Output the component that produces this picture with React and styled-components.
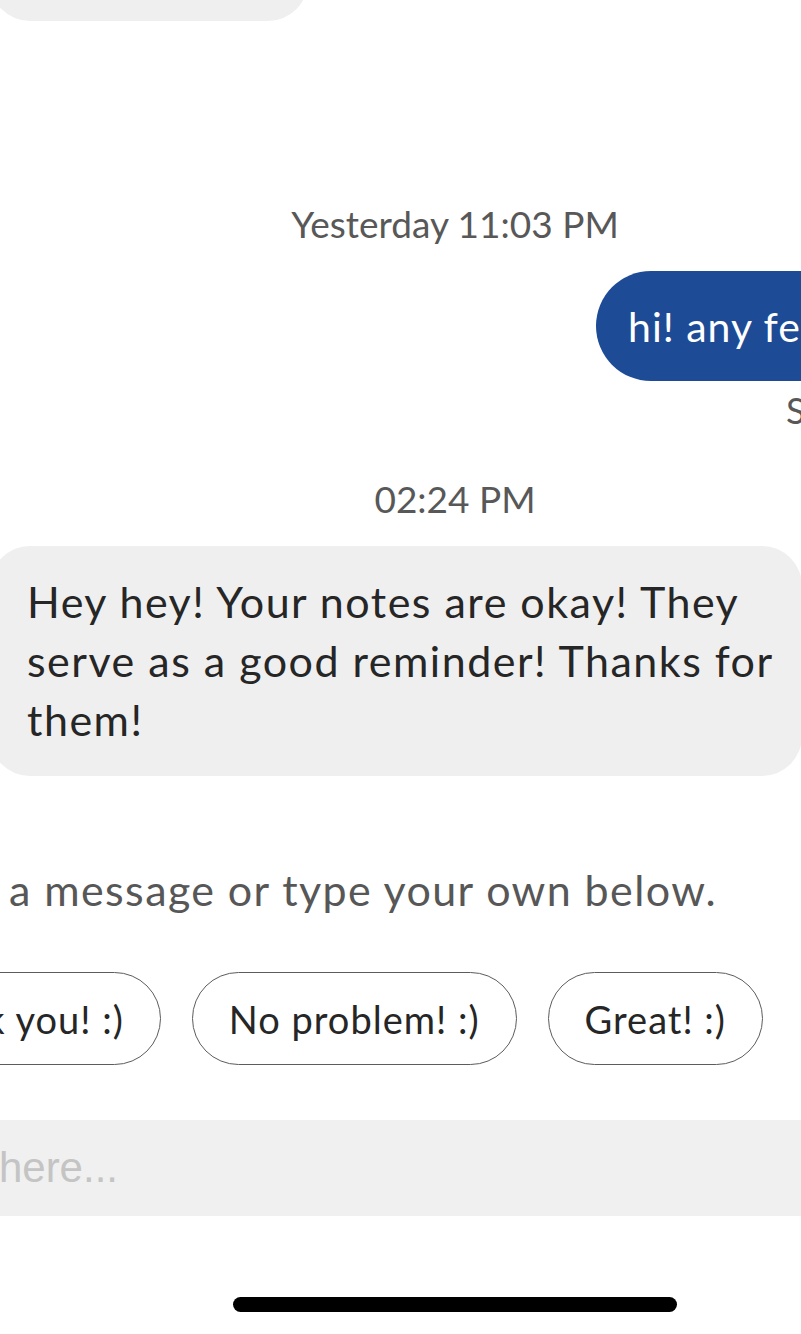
import React from 'react'
import styled, { createGlobalStyle } from 'styled-components'

const Global = createGlobalStyle`
  html, body {
    margin: 0;
    padding: 0;
    background: #fff;
  }
  body {
    font-family: Lato, "Noto Sans", sans-serif;
  }
`

const Viewport = styled.div`
  width: 801px;
  height: 1334px;
  overflow: hidden;
  background: #fff;
`

const Screen = styled.div`
  width: 930px;
  margin-left: -10px;
  height: 1334px;
  display: flex;
  flex-direction: column;
`

const Received = styled.div`
  align-self: flex-start;
  background: #efefef;
  color: #262626;
  border-radius: 40px;
  padding: 26px 20px 27px 37px;
  font-size: 43px;
  letter-spacing: 1.5px;
  line-height: 59px;
  width: 812px;
  box-sizing: border-box;
  margin-top: 25px;
`

const ClippedReceived = styled(Received)`
  width: 318px;
  height: 120px;
  margin-top: -99px;
  color: transparent;
`

const Stamp = styled.div`
  text-align: center;
  color: #585858;
  font-size: 37px;
  line-height: 44px;
  margin-top: ${p => p.$top}px;
`

const SentRow = styled.div`
  display: flex;
  margin-top: 25px;
  padding-left: 606px;
`

const Sent = styled.div`
  flex-shrink: 0;
  background: #1e4b96;
  color: #fff;
  height: 110px;
  border-radius: 55px;
  padding: 0 40px 0 32px;
  display: flex;
  align-items: center;
  font-size: 41px;
  letter-spacing: 1px;
  white-space: nowrap;
`

const Status = styled.div`
  padding-left: 796px;
  color: #585858;
  font-size: 36px;
  line-height: 40px;
  margin-top: 9px;
  white-space: nowrap;
`

const Hint = styled.div`
  display: flex;
  justify-content: flex-end;
  padding-right: 203px;
  margin-top: 89px;
  color: #575757;
  font-size: 43px;
  letter-spacing: 1.4px;
  line-height: 50px;
  white-space: nowrap;
`

const ChipRow = styled.div`
  display: flex;
  justify-content: flex-end;
  gap: 31px;
  padding-right: 157px;
  margin-top: 57px;
`

const Chip = styled.div`
  flex-shrink: 0;
  height: 93px;
  box-sizing: border-box;
  border: 1.5px solid #5c5c5c;
  border-radius: 47px;
  padding: 0 36px;
  display: flex;
  align-items: center;
  font-size: 38px;
  letter-spacing: 1px;
  color: #262626;
  white-space: nowrap;
`

const InputBar = styled.div`
  margin-top: 55px;
  height: 96px;
  background: #f0f0f0;
  display: flex;
  align-items: center;
  justify-content: flex-end;
  padding-right: 802px;
  font-family: "Liberation Sans", Arial, sans-serif;
  font-size: 42px;
  color: #c4c4c4;
  white-space: nowrap;
`

const HomeIndicator = styled.div`
  align-self: center;
  width: 444px;
  height: 15px;
  border-radius: 8px;
  background: #000;
  margin-top: 81px;
`

export default function App() {
  return (
    <Viewport>
      <Global />
      <Screen>
        <ClippedReceived>Sounds good!</ClippedReceived>
        <Stamp $top={181}>Yesterday 11:03 PM</Stamp>
        <SentRow>
          <Sent>hi! any feedback on my notes?</Sent>
        </SentRow>
        <Status>Seen</Status>
        <Stamp $top={47}>02:24 PM</Stamp>
        <Received>
          Hey hey! Your notes are okay! They serve as a good reminder! Thanks for them!
        </Received>
        <Hint>Select a message or type your own below.</Hint>
        <ChipRow>
          <Chip>Thank you! :)</Chip>
          <Chip>No problem! :)</Chip>
          <Chip>Great! :)</Chip>
        </ChipRow>
        <InputBar>Type your message here...</InputBar>
        <HomeIndicator />
      </Screen>
    </Viewport>
  )
}
